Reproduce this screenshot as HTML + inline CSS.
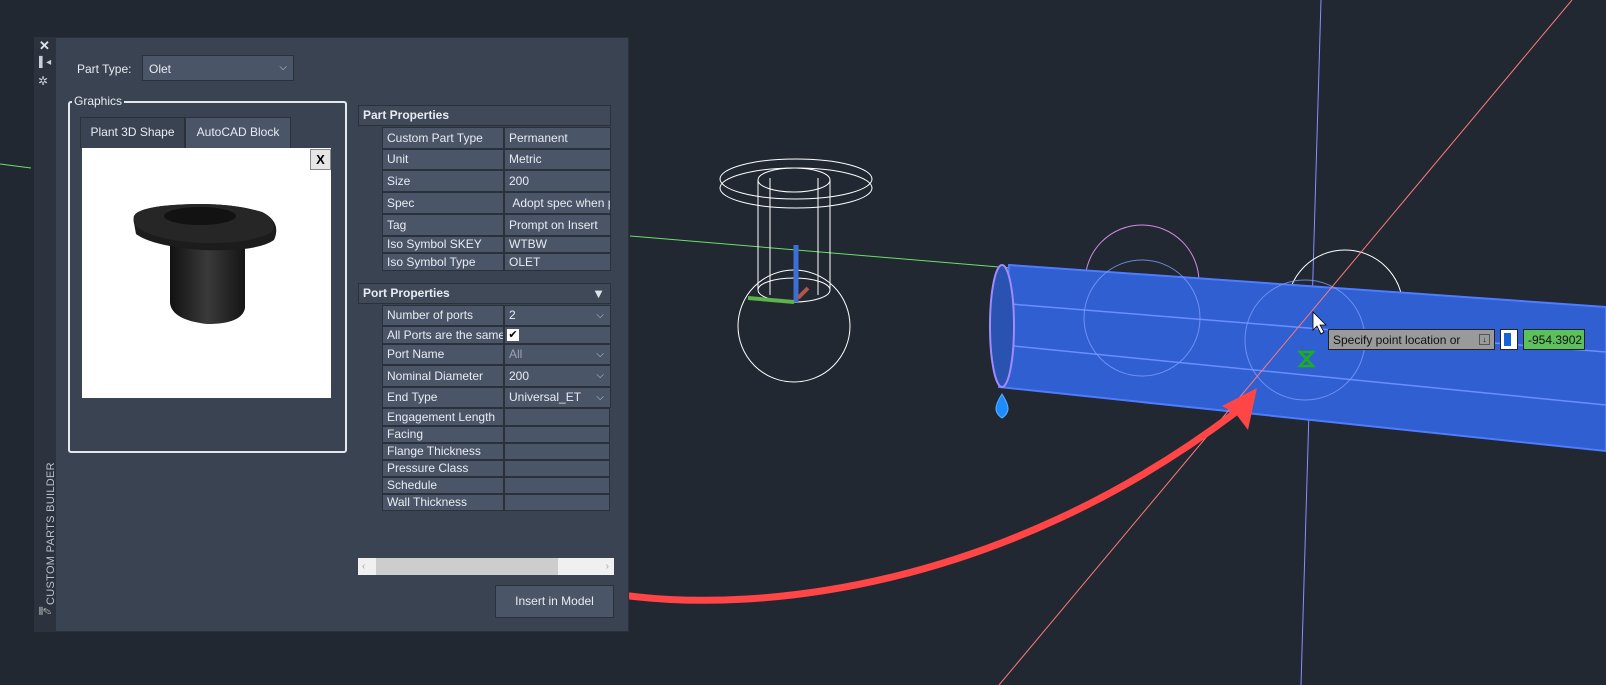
<!DOCTYPE html>
<html><head><meta charset="utf-8"><style>
*{box-sizing:border-box;margin:0;padding:0}
body{width:1606px;height:685px;overflow:hidden;background:#212831;font-family:"Liberation Sans",sans-serif;font-size:12px;color:#e8ecf2;position:relative}
.a{position:absolute}
.panel{left:34px;top:37px;width:595px;height:595px;background:#3a4352;border:1px solid #2b313b}
.side{left:34px;top:37px;width:22px;height:595px;background:#2c333e}
.cell{position:absolute;background:#4a5568;border:1px solid #2a313b;padding-left:4px;line-height:17px;white-space:nowrap;overflow:hidden}
.hdr{position:absolute;background:#404958;border:1px solid #2a313b;font-weight:bold;padding-left:4px;line-height:19px}
.chev{position:absolute;right:6px;top:0;color:#c8cfd8;font-size:10px}
</style></head><body>
<svg class="a" style="left:0;top:0" width="1606" height="685">
<line x1="0" y1="164" x2="31" y2="168" stroke="#6be06b" stroke-width="1"/>
<line x1="630" y1="236" x2="1606" y2="318" stroke="#6be06b" stroke-width="1"/>
<line x1="1321" y1="0" x2="1301" y2="685" stroke="#8a8cff" stroke-width="1"/>
<g fill="none" stroke="#fff" stroke-width="1">
<ellipse cx="796" cy="179" rx="76" ry="20"/><ellipse cx="796" cy="188" rx="76" ry="20"/>
<ellipse cx="794" cy="180" rx="36" ry="12"/>
<line x1="758" y1="180" x2="758" y2="290"/><line x1="830" y1="180" x2="830" y2="290"/>
<line x1="770" y1="178" x2="770" y2="295"/><line x1="818" y1="178" x2="818" y2="295"/>
<ellipse cx="794" cy="290" rx="36" ry="12"/>
<circle cx="794" cy="326" r="56"/>
<circle cx="1345" cy="308" r="58"/>
</g>
<line x1="796" y1="245" x2="796" y2="302" stroke="#3b6fd4" stroke-width="5"/>
<line x1="748" y1="298" x2="794" y2="302" stroke="#5cb44a" stroke-width="4"/>
<line x1="798" y1="298" x2="808" y2="288" stroke="#b5534a" stroke-width="4"/>
<circle cx="1142" cy="282" r="57" fill="none" stroke="#d48ae6"/>
<polygon points="1009,265 1606,307 1606,451 999,387" fill="#2f5fd0" stroke="#4f7cff" stroke-width="2"/>
<g stroke="#6a8eff" stroke-width="1.5" fill="none">
<line x1="1010" y1="304" x2="1606" y2="352"/><line x1="1004" y1="345" x2="1606" y2="405"/>
</g>
<g stroke="#7e9cff" stroke-width="1" fill="none" opacity=".8">
<circle cx="1142" cy="318" r="58"/><circle cx="1305" cy="340" r="60"/>
</g>
<ellipse cx="1002" cy="326" rx="12" ry="61" fill="#2a52b0" stroke="#a08aff" stroke-width="2"/>
<line x1="1009" y1="265" x2="1606" y2="318" stroke="#6be06b" stroke-width="1" opacity=".0"/>
<line x1="1572" y1="0" x2="999" y2="685" stroke="#ff7a7a" stroke-width="1"/>
<path d="M1002 394 C995 405 993 412 1002 418 C1011 412 1009 405 1002 394Z" fill="#1e8cff" stroke="#5aaeff"/>
<path d="M1300 352 L1313 352 L1300 366 L1313 366Z" fill="none" stroke="#1bb01b" stroke-width="2.5"/>
<path d="M1313 312 L1313 330 L1317 326 L1321 334 L1324 332 L1320 325 L1326 325Z" fill="#fff" stroke="#000" stroke-width=".8"/>
<path d="M630 596 C760 612 1000 590 1236 412" fill="none" stroke="#ff4545" stroke-width="7" stroke-linecap="round"/>
<polygon points="1257,388 1248,430 1236,414 1222,406" fill="#ff4545"/>
</svg>
<div class="a" style="left:1328px;top:329px;width:167px;height:21px;background:#9a9a9a;border:1px solid #222;color:#111;padding:3px 4px;font-size:12px">Specify point location or<span class="a" style="right:4px;top:4px;width:11px;height:11px;border:1px solid #555;font-size:8px;line-height:9px;text-align:center">↓</span></div>
<div class="a" style="left:1500px;top:329px;width:18px;height:21px;background:#fff;border:1px solid #222"><span class="a" style="left:3px;top:3px;width:7px;height:13px;background:#1565d8"></span></div>
<div class="a" style="left:1523px;top:329px;width:62px;height:21px;background:#5cc05c;border:1px solid #222;color:#111;padding:3px 4px">-954.3902</div>

<div class="a panel"></div>
<div class="a side"></div>
<div class="a" style="left:39px;top:38px;color:#dfe4ea;font-size:13px;font-weight:bold">✕</div>
<div class="a" style="left:39px;top:57px;color:#c8cfd8;font-size:10px">▌◂</div>
<div class="a" style="left:38px;top:74px;color:#c8cfd8;font-size:12px">✲</div>
<div class="a" style="left:34px;top:606px;width:22px;height:10px;color:#ddd;font-size:9px;text-align:center">⫼✎</div>
<div class="a" style="left:45px;top:605px;transform:rotate(-90deg);transform-origin:0 0;color:#b8c2cf;font-size:11px;white-space:nowrap;letter-spacing:.3px">CUSTOM PARTS BUILDER</div>

<div class="a" style="left:77px;top:62px">Part Type:</div>
<div class="a" style="left:142px;top:55px;width:152px;height:26px;background:#4a5568;border:1px solid #2a313b;padding:6px 6px">Olet<span class="chev" style="top:6px">⌵</span></div>

<div class="a" style="left:68px;top:101px;width:279px;height:352px;border:2px solid #e4e8ee;border-radius:3px"></div>
<div class="a" style="left:72px;top:94px;background:#3a4352;padding:0 2px">Graphics</div>
<div class="a" style="left:80px;top:117px;width:105px;height:31px;background:#3a4352;border:1px solid #2a313b;border-bottom:none;text-align:center;line-height:28px">Plant 3D Shape</div>
<div class="a" style="left:185px;top:117px;width:106px;height:31px;background:#4a5568;border:1px solid #2a313b;border-bottom:none;text-align:center;line-height:28px">AutoCAD Block</div>
<div class="a" style="left:82px;top:148px;width:249px;height:250px;background:#fff"></div>
<div class="a" style="left:310px;top:149px;width:21px;height:21px;background:#e6e6e6;border:1px solid #888;color:#000;font-weight:bold;text-align:center;line-height:19px;font-size:13px">X</div>
<svg class="a" style="left:82px;top:148px" width="249" height="250">
<defs><linearGradient id="g" x1="0" x2="1"><stop offset="0" stop-color="#111"/><stop offset=".5" stop-color="#3a3a3a"/><stop offset="1" stop-color="#151515"/></linearGradient></defs>
<path d="M88 95 L88 155 Q90 172 125 176 Q160 176 163 160 L163 95Z" fill="url(#g)"/>
<path d="M52 75 Q48 62 80 58 Q140 52 180 64 Q200 74 192 92 Q175 104 120 102 Q70 98 54 86Z" fill="#1c1c1c"/>
<path d="M52 72 Q48 62 80 58 Q140 52 180 64 Q196 72 190 84 Q170 96 120 95 Q70 92 54 78Z" fill="#262626"/>
<ellipse cx="118" cy="68" rx="36" ry="9" fill="#121212"/>
</svg>

<div class="hdr" style="left:358px;top:105px;width:253px;height:21px">Part Properties</div>
<div class="cell" style="left:382px;top:127px;width:122px;height:22px;line-height:20px">Custom Part Type</div><div class="cell" style="left:504px;top:127px;width:107px;height:22px;line-height:20px">Permanent</div>
<div class="cell" style="left:382px;top:149px;width:122px;height:21px;line-height:19px">Unit</div><div class="cell" style="left:504px;top:149px;width:107px;height:21px;line-height:19px">Metric</div>
<div class="cell" style="left:382px;top:170px;width:122px;height:22px;line-height:20px">Size</div><div class="cell" style="left:504px;top:170px;width:107px;height:22px;line-height:20px">200</div>
<div class="cell" style="left:382px;top:192px;width:122px;height:22px;line-height:20px">Spec</div><div class="cell" style="left:504px;top:192px;width:107px;height:22px;line-height:20px">&nbsp;Adopt spec when p</div>
<div class="cell" style="left:382px;top:214px;width:122px;height:22px;line-height:20px">Tag</div><div class="cell" style="left:504px;top:214px;width:107px;height:22px;line-height:20px">Prompt on Insert</div>
<div class="cell" style="left:382px;top:236px;width:122px;height:17px;line-height:15px">Iso Symbol SKEY</div><div class="cell" style="left:504px;top:236px;width:107px;height:17px;line-height:15px">WTBW</div>
<div class="cell" style="left:382px;top:253px;width:122px;height:18px;line-height:16px">Iso Symbol Type</div><div class="cell" style="left:504px;top:253px;width:107px;height:18px;line-height:16px">OLET</div>

<div class="hdr" style="left:358px;top:283px;width:253px;height:21px">Port Properties<span class="a" style="right:5px;top:0;color:#e0e4ea;font-size:13px">▼</span></div>
<div class="cell" style="left:382px;top:305px;width:122px;height:21px;line-height:19px">Number of ports</div><div class="cell" style="left:504px;top:305px;width:107px;height:21px;line-height:19px">2<span class="chev">⌵</span></div>
<div class="cell" style="left:382px;top:326px;width:122px;height:18px;line-height:16px">All Ports are the same</div><div class="cell" style="left:504px;top:326px;width:107px;height:18px;padding-left:2px"><span class="a" style="left:2px;top:2px;width:12px;height:12px;background:#fff;color:#000;font-size:11px;line-height:12px;text-align:center">✔</span></div>
<div class="cell" style="left:382px;top:344px;width:122px;height:21px;line-height:19px">Port Name</div><div class="cell" style="left:504px;top:344px;width:107px;height:21px;line-height:19px;color:#9aa3b0">All<span class="chev">⌵</span></div>
<div class="cell" style="left:382px;top:365px;width:122px;height:22px;line-height:20px">Nominal Diameter</div><div class="cell" style="left:504px;top:365px;width:107px;height:22px;line-height:20px">200<span class="chev">⌵</span></div>
<div class="cell" style="left:382px;top:387px;width:122px;height:21px;line-height:19px">End Type</div><div class="cell" style="left:504px;top:387px;width:107px;height:21px;line-height:19px">Universal_ET<span class="chev">⌵</span></div>
<div class="cell" style="left:382px;top:408px;width:122px;height:18px;line-height:16px">Engagement Length</div><div class="cell" style="left:504px;top:408px;width:106px;height:18px"></div>
<div class="cell" style="left:382px;top:426px;width:122px;height:17px;line-height:15px">Facing</div><div class="cell" style="left:504px;top:426px;width:106px;height:17px"></div>
<div class="cell" style="left:382px;top:443px;width:122px;height:17px;line-height:15px">Flange Thickness</div><div class="cell" style="left:504px;top:443px;width:106px;height:17px"></div>
<div class="cell" style="left:382px;top:460px;width:122px;height:17px;line-height:15px">Pressure Class</div><div class="cell" style="left:504px;top:460px;width:106px;height:17px"></div>
<div class="cell" style="left:382px;top:477px;width:122px;height:17px;line-height:15px">Schedule</div><div class="cell" style="left:504px;top:477px;width:106px;height:17px"></div>
<div class="cell" style="left:382px;top:494px;width:122px;height:17px;line-height:15px">Wall Thickness</div><div class="cell" style="left:504px;top:494px;width:106px;height:17px"></div>

<div class="a" style="left:358px;top:558px;width:256px;height:17px;background:#f0f0f0;color:#aaa;font-size:10px;line-height:17px;padding:0 4px">‹<span class="a" style="right:5px">›</span></div>
<div class="a" style="left:376px;top:558px;width:182px;height:17px;background:#cdcdcd"></div>
<div class="a" style="left:495px;top:585px;width:119px;height:33px;background:#4a5568;border:1px solid #2a313b;text-align:center;line-height:31px">Insert in Model</div>
</body></html>
